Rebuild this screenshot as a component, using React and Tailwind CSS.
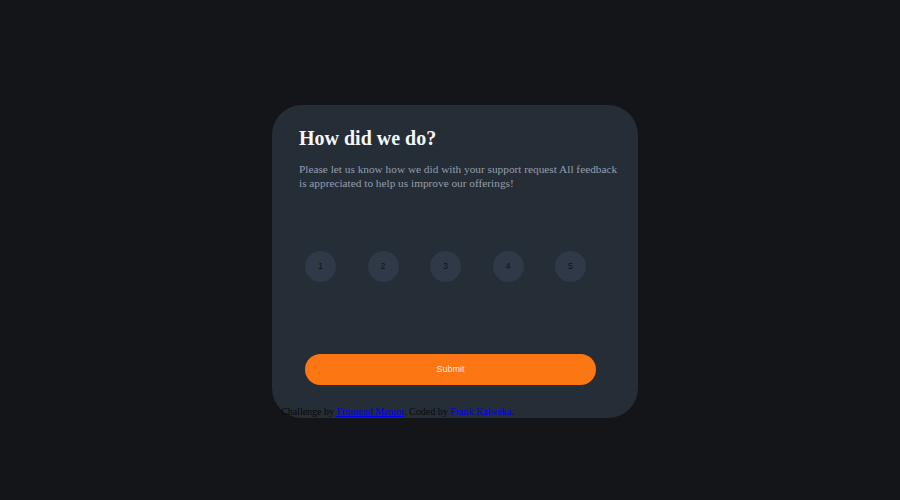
const ratings = [1, 2, 3, 4, 5];

export default function App() {
  return (
    <div className="min-h-screen w-full bg-[#141519] flex items-center justify-center font-['Liberation_Serif',serif]">
      <div className="w-[366px] h-[313px] mt-[23px] ml-[10px] rounded-[30px] bg-[#252d37] flex flex-col pt-[20px]">
        <h1 className="px-[27px] text-[20px] leading-[26px] font-bold text-[#f5f7fa]">
          How did we do?
        </h1>
        <p className="pl-[27px] pr-[18px] mt-[11px] text-[11.3px] leading-[14px] text-[#959eac]">
          Please let us know how we did with your support request All feedback is appreciated to help us improve our offerings!
        </p>
        <div className="flex gap-[31.5px] pl-[33px] mt-[61px]">
          {ratings.map((n) => (
            <button
              key={n}
              className="w-[31px] h-[31px] rounded-full bg-[#2f3947] flex items-center justify-center text-[9px] text-[#10141a] font-['Liberation_Sans',sans-serif]"
            >
              {n}
            </button>
          ))}
        </div>
        <button className="ml-[33px] w-[291px] mt-[72px] h-[31px] rounded-full bg-[#fc7614] text-[9px] text-[#fde7d6] font-['Liberation_Sans',sans-serif]">
          Submit
        </button>
        <p className="pl-[9px] mt-[20px] text-[10px] leading-[13px] text-[#0a0a0a]">
          Challenge by{" "}
          <a href="#" className="text-[#0000ee] underline">
            Frontend Mentor
          </a>
          . Coded by{" "}
          <a href="#" className="text-[#0000ee]">
            Frank Kalweka
          </a>
          .
        </p>
      </div>
    </div>
  );
}
